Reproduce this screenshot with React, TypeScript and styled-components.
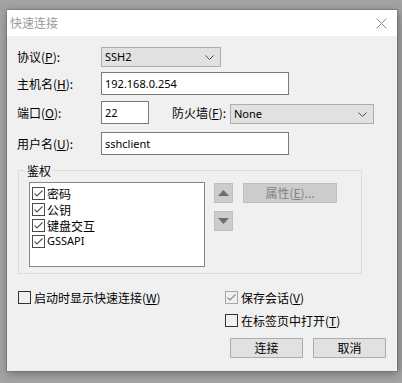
import React from "react";
import styled, { createGlobalStyle } from "styled-components";

const GlobalStyle = createGlobalStyle`
  html, body { margin: 0; padding: 0; }
  body {
    background: #a3a3a3;
    width: 402px;
    height: 383px;
    overflow: hidden;
    font-family: "Noto Sans CJK SC", "Noto Sans", sans-serif;
    color: #000;
  }
`;

const Page = styled.div`
  width: 402px;
  height: 383px;
  box-sizing: border-box;
  padding: 10px 0 0 7px;
`;

const Window = styled.div`
  width: 390px;
  height: 361px;
  background: #f0f0f0;
  box-shadow: 0 0 0 1px rgba(90, 90, 90, 0.35), 1px 2px 9px rgba(0, 0, 0, 0.35);
  display: flex;
  flex-direction: column;
`;

const TitleBar = styled.div`
  height: 26px;
  background: #fff;
  display: flex;
  align-items: center;
  justify-content: space-between;
  padding: 0 10px 0 3px;
`;

const Title = styled.span`
  font-size: 12px;
  color: #9a9a9a;
  line-height: 16px;
`;

const Body = styled.div`
  flex: 1;
  display: flex;
  flex-direction: column;
  padding: 0 11px 0 10px;
`;

const Row = styled.div<{ $mt: number }>`
  display: flex;
  align-items: center;
  margin-top: ${(p) => p.$mt}px;
`;

const Label = styled.span<{ $w: number; $ml?: number }>`
  width: ${(p) => p.$w}px;
  margin-left: ${(p) => p.$ml ?? 0}px;
  font-size: 12px;
  line-height: 16px;
  white-space: nowrap;
`;

const Key = styled.u`
  text-decoration: underline;
  text-underline-offset: 1px;
`;

const Latin = styled.span`
  font-family: "Noto Sans", "Liberation Sans", sans-serif;
  font-size: 11px;
  line-height: 14px;
`;

const Select = styled.div<{ $w: number; $mt?: number }>`
  width: ${(p) => p.$w}px;
  height: 20px;
  margin-top: ${(p) => p.$mt ?? 0}px;
  box-sizing: border-box;
  background: #e1e1e1;
  border: 1px solid #adadad;
  display: flex;
  align-items: center;
  justify-content: space-between;
  padding: 0 6px 0 3px;
`;

const TextBox = styled.div<{ $w: number }>`
  width: ${(p) => p.$w}px;
  height: 23px;
  box-sizing: border-box;
  background: #fff;
  border: 1px solid #7a7a7a;
  display: flex;
  align-items: center;
  padding: 0 3px;
`;

const GroupBox = styled.div`
  margin: 15px 0 0 1px;
  width: 344px;
  height: 104px;
  box-sizing: border-box;
  border: 1px solid #dcdcdc;
  display: flex;
  flex-direction: column;
`;

const Legend = styled.span`
  margin: -8px 0 0 6px;
  padding: 0 2px;
  align-self: flex-start;
  background: #f0f0f0;
  font-size: 12px;
  line-height: 16px;
`;

const GroupContent = styled.div`
  display: flex;
  align-items: flex-start;
  margin-top: 3px;
  padding-left: 10px;
`;

const ListBox = styled.div`
  width: 176px;
  height: 85px;
  box-sizing: border-box;
  background: #fff;
  border: 1px solid #828790;
  padding: 2px 0 0 2px;
  display: flex;
  flex-direction: column;
`;

const ListItem = styled.div`
  height: 16px;
  display: flex;
  align-items: center;
  gap: 2px;
  font-size: 12px;
`;

const ArrowColumn = styled.div`
  display: flex;
  flex-direction: column;
  gap: 8px;
  margin: 1px 0 0 9px;
`;

const ArrowButton = styled.div`
  width: 19px;
  height: 20px;
  box-sizing: border-box;
  background: #cccccc;
  border: 1px solid #bfbfbf;
  display: flex;
  align-items: center;
  justify-content: center;
`;

const Button = styled.div<{ $w: number; $disabled?: boolean }>`
  width: ${(p) => p.$w}px;
  height: 20px;
  box-sizing: border-box;
  background: ${(p) => (p.$disabled ? "#cccccc" : "#e1e1e1")};
  border: 1px solid ${(p) => (p.$disabled ? "#bfbfbf" : "#adadad")};
  color: ${(p) => (p.$disabled ? "#838383" : "#000")};
  display: flex;
  align-items: center;
  justify-content: center;
  font-size: 12px;
  line-height: 16px;
`;

const PropsButton = styled(Button)`
  margin: 1px 0 0 10px;
`;

const BottomChecks = styled.div`
  display: grid;
  grid-template-columns: 207px auto;
  grid-auto-rows: 13px;
  row-gap: 10px;
  margin: 17px 0 0 1px;
`;

const CheckLabel = styled.div<{ $col: number; $row: number }>`
  grid-column: ${(p) => p.$col};
  grid-row: ${(p) => p.$row};
  display: flex;
  align-items: center;
  gap: 3px;
  font-size: 12px;
  line-height: 13px;
  white-space: nowrap;
`;

const ButtonRow = styled.div`
  display: flex;
  justify-content: flex-end;
  gap: 10px;
  margin-top: 11px;
`;

const Box = styled.span<{ $border: string }>`
  width: 13px;
  height: 13px;
  box-sizing: border-box;
  border: 1px solid ${(p) => p.$border};
  background: transparent;
  display: inline-flex;
  flex: none;
`;

type CheckVariant = "list" | "normal" | "disabled";

const Check: React.FC<{ checked?: boolean; variant?: CheckVariant }> = ({ checked, variant = "normal" }) => {
  const border = variant === "disabled" ? "#a8a8a8" : variant === "list" ? "#4a4a4a" : "#333333";
  const mark = variant === "disabled" ? "#8c8c8c" : "#555555";
  return (
    <Box $border={border}>
      {checked && (
        <svg width="11" height="11" viewBox="0 0 11 11">
          <polyline points="1.5,5.5 4,8 9.5,2.5" fill="none" stroke={mark} strokeWidth="1.2" />
        </svg>
      )}
    </Box>
  );
};

const Chevron = () => (
  <svg width="9" height="5" viewBox="0 0 9 5">
    <polyline points="0.5,0.5 4.5,4.5 8.5,0.5" fill="none" stroke="#505050" strokeWidth="1" />
  </svg>
);

const CloseIcon = () => (
  <svg width="11" height="11" viewBox="0 0 11 11">
    <line x1="0.5" y1="0.5" x2="10.5" y2="10.5" stroke="#8a8a8a" strokeWidth="1" />
    <line x1="10.5" y1="0.5" x2="0.5" y2="10.5" stroke="#8a8a8a" strokeWidth="1" />
  </svg>
);

const Triangle: React.FC<{ up?: boolean }> = ({ up }) => (
  <svg width="11" height="6" viewBox="0 0 11 6">
    <polygon points={up ? "0,6 11,6 5.5,0" : "0,0 11,0 5.5,6"} fill="#6d6d6d" />
  </svg>
);

const authItems = ["密码", "公钥", "键盘交互", "GSSAPI"];

export default function App() {
  return (
    <>
      <GlobalStyle />
      <Page>
        <Window>
          <TitleBar>
            <Title>快速连接</Title>
            <CloseIcon />
          </TitleBar>
          <Body>
            <Row $mt={11}>
              <Label $w={84}>
                协议(<Key>P</Key>):
              </Label>
              <Select $w={120}>
                <Latin>SSH2</Latin>
                <Chevron />
              </Select>
            </Row>
            <Row $mt={5}>
              <Label $w={84}>
                主机名(<Key>H</Key>):
              </Label>
              <TextBox $w={188}>
                <Latin>192.168.0.254</Latin>
              </TextBox>
            </Row>
            <Row $mt={6}>
              <Label $w={84}>
                端口(<Key>O</Key>):
              </Label>
              <TextBox $w={48}>
                <Latin>22</Latin>
              </TextBox>
              <Label $w={58} $ml={23}>
                防火墙(<Key>F</Key>):
              </Label>
              <Select $w={144} $mt={3}>
                <Latin>None</Latin>
                <Chevron />
              </Select>
            </Row>
            <Row $mt={8}>
              <Label $w={84}>
                用户名(<Key>U</Key>):
              </Label>
              <TextBox $w={188}>
                <Latin>sshclient</Latin>
              </TextBox>
            </Row>
            <GroupBox>
              <Legend>鉴权</Legend>
              <GroupContent>
                <ListBox>
                  {authItems.map((item) => (
                    <ListItem key={item}>
                      <Check checked variant="list" />
                      {item === "GSSAPI" ? <Latin>{item}</Latin> : <span>{item}</span>}
                    </ListItem>
                  ))}
                </ListBox>
                <ArrowColumn>
                  <ArrowButton>
                    <Triangle up />
                  </ArrowButton>
                  <ArrowButton>
                    <Triangle />
                  </ArrowButton>
                </ArrowColumn>
                <PropsButton $w={94} $disabled>
                  属性(<Key>E</Key>)...
                </PropsButton>
              </GroupContent>
            </GroupBox>
            <BottomChecks>
              <CheckLabel $col={1} $row={1}>
                <Check />
                <span>
                  启动时显示快速连接(<Key>W</Key>)
                </span>
              </CheckLabel>
              <CheckLabel $col={2} $row={1}>
                <Check checked variant="disabled" />
                <span>
                  保存会话(<Key>V</Key>)
                </span>
              </CheckLabel>
              <CheckLabel $col={2} $row={2}>
                <Check />
                <span>
                  在标签页中打开(<Key>T</Key>)
                </span>
              </CheckLabel>
            </BottomChecks>
            <ButtonRow>
              <Button $w={73}>连接</Button>
              <Button $w={73}>取消</Button>
            </ButtonRow>
          </Body>
        </Window>
      </Page>
    </>
  );
}
